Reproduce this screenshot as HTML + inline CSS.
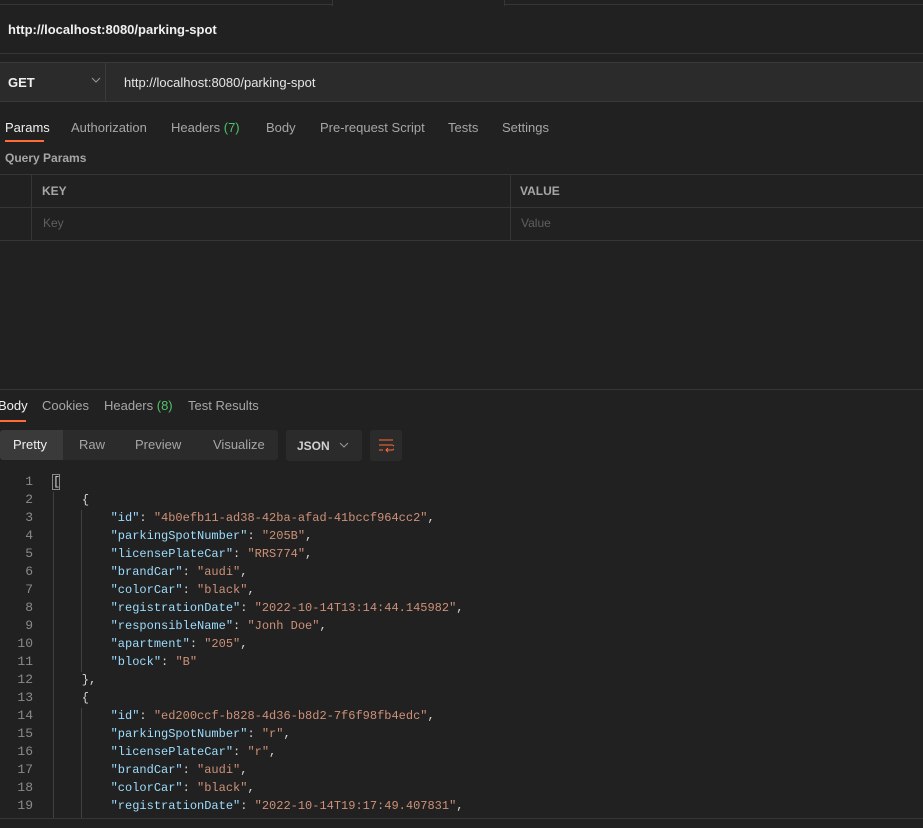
<!DOCTYPE html>
<html><head><style>
*{margin:0;padding:0;box-sizing:border-box}
body{width:923px;height:828px;background:#212121;font-family:"Liberation Sans",sans-serif;color:#e6e6e6;position:relative;overflow:hidden;font-size:13px}
.a{position:absolute}
.tab{color:#a6a6a6}
.g{color:#51c26b}
.code{font-family:"Liberation Mono",monospace;font-size:12px;line-height:18px}
.k{color:#9cdcfe}.s{color:#ce9178}.p{color:#d4d4d4}
.ln{position:absolute;left:0;width:33px;text-align:right;color:#8a8a8a;font-size:13px}
</style></head><body>
<div class="a" style="left:0;top:0;width:923px;height:5px;border-bottom:1px solid #363636"></div>
<div class="a" style="left:332px;top:0;width:173px;height:6px;background:#212121;border-left:1px solid #363636;border-right:1px solid #363636"></div>
<div class="a" style="left:8px;top:22px;font-weight:bold;font-size:13px;color:#f0f0f0">http://localhost:8080/parking-spot</div>
<div class="a" style="left:0;top:53px;width:923px;border-top:1px solid #363636"></div>
<div class="a" style="left:0;top:62px;width:923px;height:40px;background:#2b2b2b;border-top:1px solid #3a3a3a;border-bottom:1px solid #3a3a3a"></div>
<div class="a" style="left:105px;top:63px;width:1px;height:38px;background:#3a3a3a"></div>
<div class="a" style="left:8px;top:75px;font-weight:bold;color:#f0f0f0">GET</div>
<svg class="a" style="left:91px;top:77px" width="10" height="6"><path d="M1 1l4 4 4-4" fill="none" stroke="#999" stroke-width="1"/></svg>
<div class="a" style="left:124px;top:75px;color:#e6e6e6">http://localhost:8080/parking-spot</div>
<div class="a tab" style="left:5px;top:120px;color:#f0f0f0">Params</div>
<div class="a" style="left:5px;top:140px;width:39px;height:2px;background:#ff6c37"></div>
<div class="a tab" style="left:71px;top:120px">Authorization</div>
<div class="a tab" style="left:171px;top:120px">Headers <span class="g">(7)</span></div>
<div class="a tab" style="left:266px;top:120px">Body</div>
<div class="a tab" style="left:320px;top:120px">Pre-request Script</div>
<div class="a tab" style="left:448px;top:120px">Tests</div>
<div class="a tab" style="left:502px;top:120px">Settings</div>
<div class="a" style="left:5px;top:151px;font-size:12px;font-weight:bold;color:#a6a6a6">Query Params</div>
<div class="a" style="left:0;top:174px;width:923px;height:67px;border-top:1px solid #363636;border-bottom:1px solid #363636"></div>
<div class="a" style="left:0;top:207px;width:923px;border-top:1px solid #363636"></div>
<div class="a" style="left:31px;top:174px;width:1px;height:67px;background:#363636"></div>
<div class="a" style="left:510px;top:174px;width:1px;height:67px;background:#363636"></div>
<div class="a" style="left:42px;top:184px;font-size:12px;font-weight:bold;color:#a6a6a6">KEY</div>
<div class="a" style="left:520px;top:184px;font-size:12px;font-weight:bold;color:#a6a6a6">VALUE</div>
<div class="a" style="left:43px;top:216px;font-size:12px;color:#5f5f5f">Key</div>
<div class="a" style="left:521px;top:216px;font-size:12px;color:#5f5f5f">Value</div>
<div class="a" style="left:0;top:389px;width:923px;border-top:1px solid #363636"></div>
<div class="a tab" style="left:-2px;top:398px;color:#f0f0f0">Body</div>
<div class="a" style="left:0;top:420px;width:26px;height:2px;background:#ff6c37"></div>
<div class="a tab" style="left:42px;top:398px">Cookies</div>
<div class="a tab" style="left:104px;top:398px">Headers <span class="g">(8)</span></div>
<div class="a tab" style="left:188px;top:398px">Test Results</div>
<div class="a" style="left:0;top:430px;width:278px;height:30px;background:#2b2b2b;border-radius:3px"></div>
<div class="a" style="left:0;top:430px;width:63px;height:30px;background:#3a3a3a;border-radius:3px 0 0 3px"></div>
<div class="a" style="left:13px;top:437px;color:#f0f0f0">Pretty</div>
<div class="a tab" style="left:79px;top:437px">Raw</div>
<div class="a tab" style="left:135px;top:437px">Preview</div>
<div class="a tab" style="left:213px;top:437px">Visualize</div>
<div class="a" style="left:286px;top:430px;width:76px;height:31px;background:#2b2b2b;border-radius:3px"></div>
<div class="a" style="left:297px;top:439px;font-size:12px;font-weight:bold;color:#d0d0d0">JSON</div>
<svg class="a" style="left:339px;top:442px" width="10" height="6"><path d="M1 1l4 4 4-4" fill="none" stroke="#999" stroke-width="1"/></svg>
<div class="a" style="left:370px;top:430px;width:32px;height:31px;background:#2b2b2b;border-radius:3px"></div>
<svg class="a" style="left:378px;top:438px" width="16" height="15"><path d="M1 2h14M1 7h13M1 12h4" stroke="#ff6c37" stroke-width="1" fill="none"/><path d="M8 12h6a2 2 0 0 0 0-5M10 10l-2 2 2 2" stroke="#ff6c37" stroke-width="1" fill="none"/></svg>
<div class="a" style="left:52px;top:474px;width:8px;height:16px;border:1px solid #8a8a8a"></div>
<div class="a" style="left:53px;top:492px;width:1px;height:326px;background:#404040"></div>
<div class="a" style="left:81px;top:510px;width:1px;height:162px;background:#404040"></div>
<div class="a" style="left:81px;top:708px;width:1px;height:110px;background:#404040"></div>
<div class="a code" style="left:0;top:473px;width:923px;height:345px">
<div class="ln" style="top:0">1<br>2<br>3<br>4<br>5<br>6<br>7<br>8<br>9<br>10<br>11<br>12<br>13<br>14<br>15<br>16<br>17<br>18<br>19</div>
<pre class="code" style="position:absolute;left:53px;top:0;font-family:inherit;color:#d4d4d4"><span class="p">[</span>
    <span class="p">{</span>
        <span class="k">"id"</span>: <span class="s">"4b0efb11-ad38-42ba-afad-41bccf964cc2"</span>,
        <span class="k">"parkingSpotNumber"</span>: <span class="s">"205B"</span>,
        <span class="k">"licensePlateCar"</span>: <span class="s">"RRS774"</span>,
        <span class="k">"brandCar"</span>: <span class="s">"audi"</span>,
        <span class="k">"colorCar"</span>: <span class="s">"black"</span>,
        <span class="k">"registrationDate"</span>: <span class="s">"2022-10-14T13:14:44.145982"</span>,
        <span class="k">"responsibleName"</span>: <span class="s">"Jonh Doe"</span>,
        <span class="k">"apartment"</span>: <span class="s">"205"</span>,
        <span class="k">"block"</span>: <span class="s">"B"</span>
    },
    {
        <span class="k">"id"</span>: <span class="s">"ed200ccf-b828-4d36-b8d2-7f6f98fb4edc"</span>,
        <span class="k">"parkingSpotNumber"</span>: <span class="s">"r"</span>,
        <span class="k">"licensePlateCar"</span>: <span class="s">"r"</span>,
        <span class="k">"brandCar"</span>: <span class="s">"audi"</span>,
        <span class="k">"colorCar"</span>: <span class="s">"black"</span>,
        <span class="k">"registrationDate"</span>: <span class="s">"2022-10-14T19:17:49.407831"</span>,</pre>
</div>
<div class="a" style="left:0;top:818px;width:923px;height:10px;background:#212121;border-top:1px solid #363636"></div>
</body></html>
